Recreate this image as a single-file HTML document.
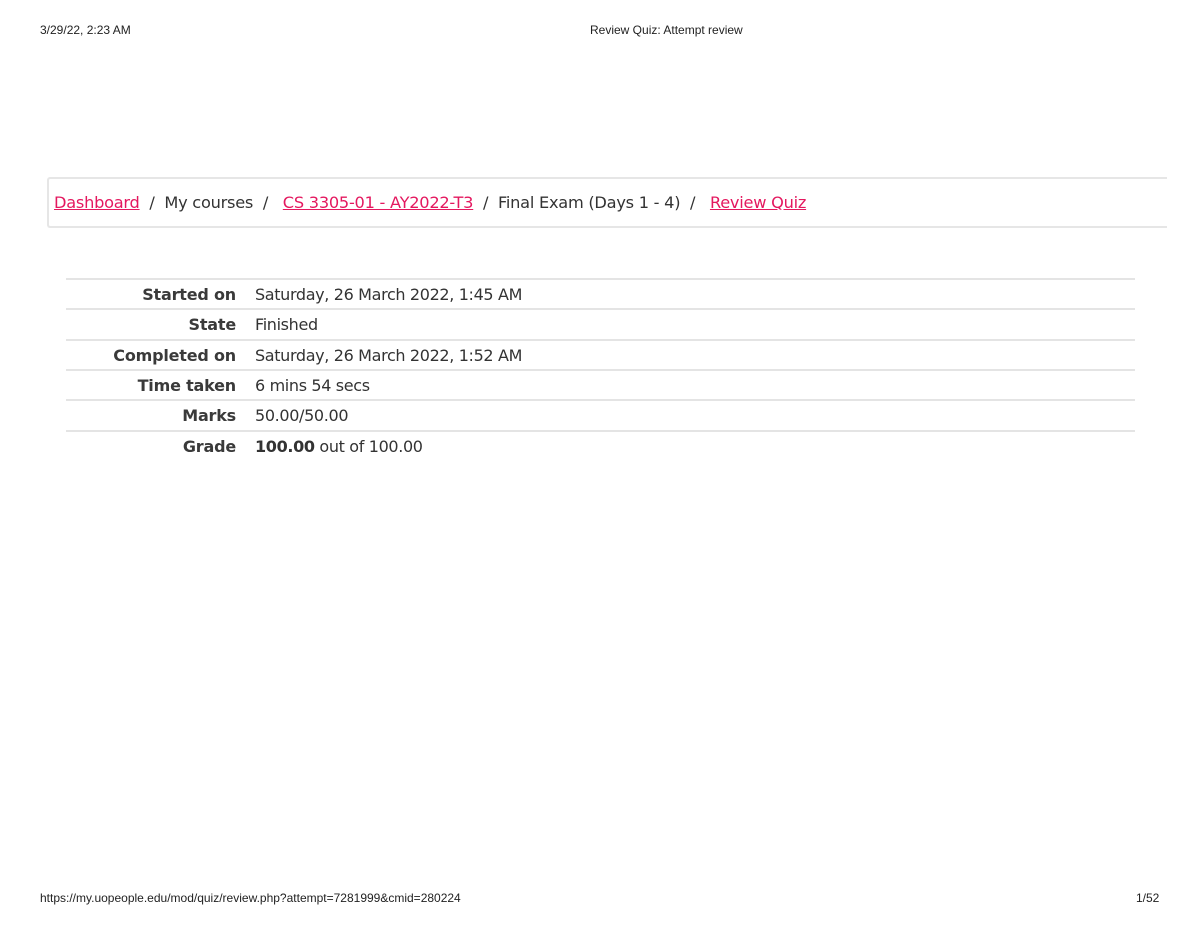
<!DOCTYPE html>
<html><head><meta charset="utf-8"><style>
body{margin:0;width:1200px;height:927px;background:#fff;position:relative;font-family:"DejaVu Sans","Liberation Sans",sans-serif;overflow:hidden}
.hdr{position:absolute;font-family:"Liberation Sans",sans-serif;font-size:12px;color:#222}
.bc{position:absolute;left:47px;top:177px;width:1120px;height:51px;border:2px solid #e6e6e6;border-right:none;border-radius:3px 0 0 3px;box-sizing:border-box}
.bct{position:absolute;left:54px;top:193px;font-size:16.2px;color:#333;white-space:pre;letter-spacing:-0.25px}
.bct a{color:#e4185f;text-decoration:underline}
.line{position:absolute;left:66px;width:1069px;height:2px;background:#e4e4e4}
.lab{position:absolute;right:964px;font-size:16px;font-weight:bold;color:#3a3a3a;letter-spacing:-0.2px}
.val{position:absolute;left:255px;font-size:16px;color:#333;letter-spacing:-0.35px}
</style></head><body>
<div class="hdr" style="left:40px;top:23px">3/29/22, 2:23 AM</div>
<div class="hdr" style="left:590px;top:23px">Review Quiz: Attempt review</div>
<div class="hdr" style="left:40px;top:891px">https://my.uopeople.edu/mod/quiz/review.php?attempt=7281999&amp;cmid=280224</div>
<div class="hdr" style="left:1136px;top:891px">1/52</div>
<div class="bc"></div>
<div class="bct"><a>Dashboard</a>  /  My courses  /   <a>CS 3305-01 - AY2022-T3</a>  /  Final Exam (Days 1 - 4)  /   <a>Review Quiz</a></div>
<div class="line" style="top:278px"></div>
<div class="line" style="top:308px"></div>
<div class="line" style="top:339px"></div>
<div class="line" style="top:369px"></div>
<div class="line" style="top:399px"></div>
<div class="line" style="top:430px"></div>
<div class="lab" style="top:285px">Started on</div><div class="val" style="top:285px">Saturday, 26 March 2022, 1:45 AM</div>
<div class="lab" style="top:315px">State</div><div class="val" style="top:315px">Finished</div>
<div class="lab" style="top:346px">Completed on</div><div class="val" style="top:346px">Saturday, 26 March 2022, 1:52 AM</div>
<div class="lab" style="top:376px">Time taken</div><div class="val" style="top:376px">6 mins 54 secs</div>
<div class="lab" style="top:406px">Marks</div><div class="val" style="top:406px">50.00/50.00</div>
<div class="lab" style="top:437px">Grade</div><div class="val" style="top:437px"><b>100.00</b> out of 100.00</div>
</body></html>
